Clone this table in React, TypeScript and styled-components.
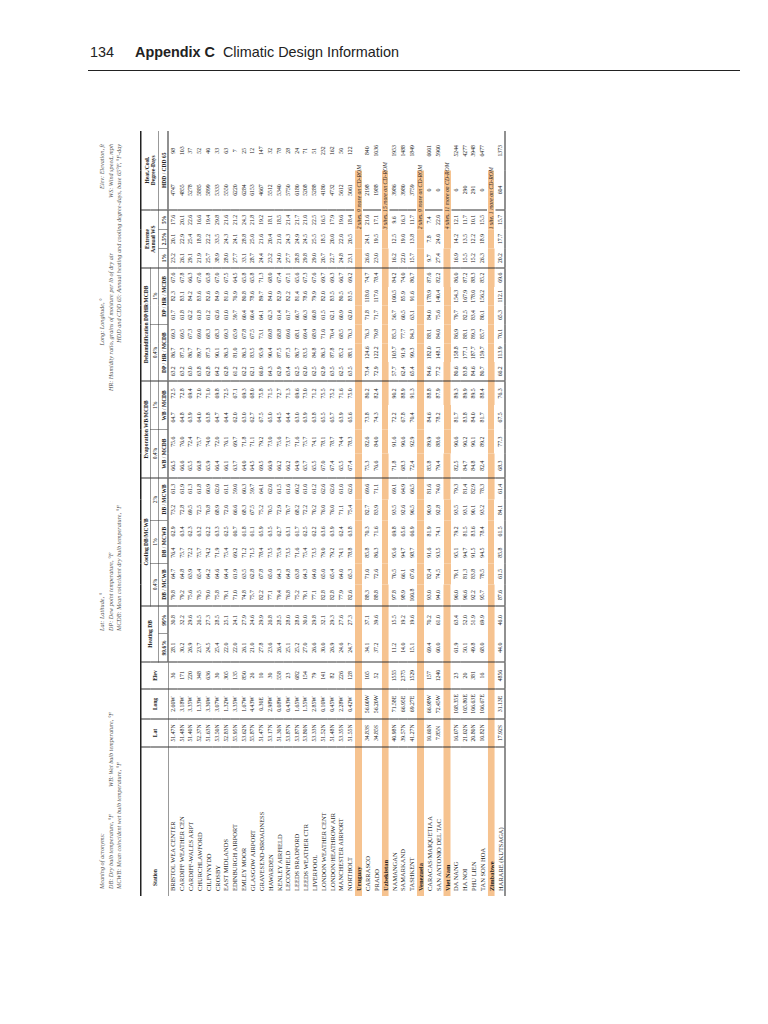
import React from 'react'
import styled, { createGlobalStyle } from 'styled-components'

const GlobalStyle = createGlobalStyle`
  body {
    margin: 0;
    background: #fff;
  }
`

const Page = styled.div`
  width: 768px;
  min-height: 1024px;
  padding-top: 43px;
  box-sizing: border-box;
  color: #222;
`

const Heading = styled.div`
  display: flex;
  align-items: baseline;
  padding-left: 90px;
  font-family: "Liberation Sans", Arial, sans-serif;
  font-size: 14.4px;
  line-height: 18px;
`

const PageNum = styled.span`
  margin-right: 21px;
`

const Chapter = styled.span`
  font-weight: 700;
  margin-right: 8px;
`

const Rule = styled.div`
  margin: 9px 0 0 88px;
  width: 652px;
  border-top: 1.5px solid #222;
`

// the landscape table is printed turned a quarter turn, so it is laid out
// flat at twice the size and then turned and halved
const Sheet = styled.div`
  margin: 60px 0 0 98px;
  width: 407px;
  height: 765px;
`

const Turned = styled.div`
  width: 1530px;
  transform-origin: 0 0;
  transform: translateY(765px) rotate(-90deg) scale(0.5);
  font-family: "Liberation Serif", "Times New Roman", serif;
  color: #222;
`

const Notes = styled.div`
  display: grid;
  grid-template-columns: 204px 312px 480px auto 1fr;
  grid-auto-rows: 17px;
  height: 54px;
  padding: 0 26px 0 14px;
  margin-bottom: 30px;
  font-size: 12.4px;
  font-style: italic;
  color: #555;
  white-space: nowrap;
  line-height: 17px;
`

const Note = styled.span<{ $col: number; $row: number; $span?: number; $end?: boolean; $center?: boolean }>`
  grid-column: ${(p) => p.$col} / span ${(p) => p.$span || 1};
  grid-row: ${(p) => p.$row};
  justify-self: ${(p) => (p.$end ? 'end' : p.$center ? 'center' : 'start')};
`

const Table = styled.table`
  width: 1530px;
  table-layout: fixed;
  border-collapse: collapse;
  border-top: 3px solid #222;
  border-bottom: 2px solid #222;
  border-left: hidden;
  border-right: hidden;
`

const Group = styled.colgroup`
  border-left: 2px solid #333;
  border-right: 2px solid #333;
`

const Col = styled.col<{ $w: number }>`
  width: ${(p) => p.$w}px;
`

const Th = styled.th<{ $left?: boolean; $light?: boolean; $h?: number }>`
  border: 1.6px solid #333;
  padding: 0 0 0 ${(p) => (p.$left ? '20px' : '0')};
  height: ${(p) => p.$h || 16}px;
  font-size: 11px;
  line-height: 12px;
  font-weight: ${(p) => (p.$light ? 400 : 700)};
  text-align: ${(p) => (p.$left ? 'left' : 'center')};
  vertical-align: middle;
  white-space: nowrap;
`

const HeadBottom = styled.tr`
  th {
    border-bottom: 2px solid #222;
  }
`

const Td = styled.td<{ $left?: boolean }>`
  height: 17.7px;
  padding: 0 0 0 ${(p) => (p.$left ? '10px' : '0')};
  font-size: ${(p) => (p.$left ? '13px' : '11.5px')};
  line-height: 1;
  text-align: ${(p) => (p.$left ? 'left' : 'center')};
  vertical-align: middle;
  white-space: nowrap;
  overflow: hidden;
`

const StripCell = styled.td<{ $note?: boolean }>`
  height: 17.7px;
  padding: 0 ${(p) => (p.$note ? '8px' : '0')} 0 ${(p) => (p.$note ? '0' : '10px')};
  background: linear-gradient(
    to bottom,
    transparent 2px,
    #f6c390 2px,
    #f6c390 calc(100% - 2px),
    transparent calc(100% - 2px)
  );
  font-size: ${(p) => (p.$note ? '11.5px' : '13px')};
  font-style: ${(p) => (p.$note ? 'italic' : 'normal')};
  font-weight: ${(p) => (p.$note ? 400 : 700)};
  text-align: ${(p) => (p.$note ? 'right' : 'left')};
  line-height: 1;
  vertical-align: middle;
  white-space: nowrap;
`

type Section = { country?: string; note?: string; rows: [string, string][] }

const sections: Section[] = [
  {
    rows: [
      ['BRISTOL WEA CENTER', '51.47N 2.60W 36 28.1 30.8 79.8 64.7 76.4 62.9 73.2 61.3 66.5 75.6 64.7 72.5 63.2 86.7 69.3 61.7 82.3 67.6 23.2 20.1 17.6 4747 98'],
      ['CARDIFF WEATHER CEN', '51.48N 3.18W 171 30.2 32.2 79.2 64.8 75.7 63.4 72.8 61.9 66.6 76.0 64.8 72.8 63.2 87.3 69.5 61.8 83.1 67.8 26.1 22.9 20.1 4855 103'],
      ['CARDIFF-WALES ARPT', '51.40N 3.35W 220 26.9 29.6 75.6 63.9 72.2 62.3 69.5 61.3 65.5 72.4 63.9 69.4 63.0 86.7 67.3 62.2 84.2 66.3 29.1 25.4 22.6 5278 37'],
      ['CHURCHLAWFORD', '52.37N 1.33W 348 23.7 26.5 79.5 65.4 75.7 63.2 72.5 61.8 66.8 75.7 64.0 72.0 63.8 89.7 69.0 61.8 83.6 67.6 21.9 18.8 16.6 5885 52'],
      ['CILFYNYDD', '51.63N 3.30W 636 24.5 27.3 79.0 64.2 74.2 62.2 70.8 60.9 65.9 74.0 63.8 71.0 62.8 87.3 68.3 61.2 82.6 65.8 25.7 22.2 19.4 5899 40'],
      ['CROSBY', '53.50N 3.07W 30 25.4 28.5 75.8 64.6 71.9 63.3 68.9 62.0 66.4 72.0 64.7 69.8 64.2 90.1 68.3 62.6 84.9 67.0 38.9 33.5 29.8 5333 33'],
      ['EAST MIDLANDS', '52.83N 1.32W 305 22.0 25.1 79.1 64.4 75.4 62.5 72.0 61.1 66.1 76.1 64.4 72.5 62.8 86.3 69.3 61.0 81.0 67.5 28.0 24.3 21.6 5550 63'],
      ['EDINBURGH AIRPORT', '55.95N 3.35W 135 22.0 24.1 71.0 61.9 69.2 60.7 66.6 59.0 63.7 69.7 62.0 67.1 61.2 81.0 65.9 59.7 76.9 64.5 27.7 24.1 21.2 6220 7'],
      ['EMLEY MOOR', '53.62N 1.67W 850 26.1 27.9 74.8 63.5 71.2 61.8 68.3 60.3 64.0 71.8 63.0 69.3 62.2 86.3 67.8 60.4 80.8 65.8 33.1 28.8 24.3 6284 25'],
      ['GLASGOW AIRPORT', '55.87N 4.43W 26 21.0 24.6 75.7 62.8 71.5 61.1 67.5 59.7 64.5 71.1 62.7 68.0 62.1 83.5 67.5 60.4 78.6 65.8 28.7 25.0 21.8 6153 12'],
      ['GRAVESEND-BROADNESS', '51.47N 0.30E 10 27.8 29.9 82.2 67.8 78.4 65.9 75.2 64.1 69.5 79.2 67.5 75.8 66.0 95.9 73.1 64.1 89.7 71.3 24.4 21.6 19.2 4667 147'],
      ['HAWARDEN', '53.17N 2.98W 30 23.6 26.8 77.1 65.0 73.5 63.5 70.5 62.0 66.9 73.0 65.0 71.5 64.3 90.4 69.8 62.3 84.0 68.0 23.2 20.4 18.1 5512 32'],
      ['KENLEY AIRFIELD', '51.30N 0.08W 558 26.4 28.5 79.4 64.3 75.9 62.7 72.9 61.5 66.2 75.6 64.5 72.7 62.9 87.5 68.8 61.4 82.9 67.4 24.0 21.0 18.5 5340 78'],
      ['LECONFIELD', '53.87N 0.43W 23 25.1 28.0 76.8 64.8 73.5 63.1 70.7 61.6 66.2 73.7 64.4 71.3 63.4 87.3 69.6 61.7 82.2 67.1 27.7 24.3 21.4 5750 28'],
      ['LEEDS BRADFORD', '53.87N 1.65W 682 25.2 28.0 75.2 63.8 71.6 61.7 68.2 60.2 64.9 71.6 63.0 69.6 62.5 86.7 68.1 60.7 81.4 65.6 28.8 24.9 21.7 6180 24'],
      ['LEEDS WEATHER CTR', '53.80N 1.55W 154 27.0 30.0 79.1 64.3 75.4 62.5 72.2 61.0 65.7 75.7 63.9 73.0 62.0 83.5 69.4 60.3 78.6 67.3 29.8 24.5 21.0 5208 71'],
      ['LIVERPOOL', '53.33N 2.85W 79 26.6 29.8 77.1 64.0 73.5 62.2 70.2 61.2 65.5 74.1 63.8 71.2 62.5 84.8 68.9 60.8 79.9 67.6 29.0 25.5 22.5 5288 51'],
      ['LONDON WEATHER CENT', '51.52N 0.10W 141 30.0 32.1 82.8 65.0 79.0 63.6 76.0 62.6 67.0 78.1 65.5 75.5 62.9 86.3 71.0 61.5 82.0 69.7 20.7 18.5 16.5 4180 232'],
      ['LONDON/HEATHROW AIR', '51.48N 0.45W 82 26.9 29.3 82.8 65.4 79.2 63.9 76.0 62.6 67.4 78.7 65.7 75.2 63.5 87.8 70.4 62.1 83.5 69.3 22.7 20.0 17.9 4732 162'],
      ['MANCHESTER AIRPORT', '53.35N 2.28W 226 24.6 27.6 77.9 64.0 74.1 62.4 71.1 61.0 65.5 74.4 63.9 71.6 62.5 85.2 68.5 60.9 80.5 66.7 24.8 22.0 19.6 5612 50'],
      ['NORTHOLT', '51.55N 0.42W 128 24.7 27.3 82.6 65.3 78.8 63.8 75.4 62.6 67.4 78.3 65.6 75.0 63.5 88.1 70.3 62.0 83.5 69.2 23.1 20.5 18.4 5061 122'],
    ],
  },
  {
    country: 'Uruguay',
    note: '2 sites, 9 more on CD-ROM',
    rows: [
      ['CARRASCO', '34.83S 56.00W 105 34.1 37.1 88.3 71.0 85.8 70.3 82.7 69.6 75.3 82.6 73.8 80.2 73.4 124.6 76.3 71.8 118.0 74.7 26.6 24.1 21.6 2198 840'],
      ['PRADO', '34.85S 56.20W 52 37.2 39.6 88.8 72.6 86.3 71.6 83.9 71.1 76.6 84.0 74.3 82.4 72.9 122.2 79.8 71.7 117.0 78.4 23.0 19.5 17.1 1988 1036'],
    ],
  },
  {
    country: 'Uzbekistan',
    note: '3 sites, 15 more on CD-ROM',
    rows: [
      ['NAMANGAN', '40.98N 71.58E 1555 11.2 15.5 97.8 70.5 95.6 69.8 93.5 69.1 71.8 91.6 72.2 90.2 57.7 103.7 85.3 56.7 100.5 84.2 16.2 12.5 9.6 3986 1953'],
      ['SAMARKAND', '39.57N 66.95E 2375 14.0 19.2 98.9 66.1 94.7 65.6 92.6 64.9 68.3 90.6 67.8 88.9 62.4 91.9 77.7 60.5 85.9 74.0 22.0 19.0 16.3 3980 1488'],
      ['TASHKENT', '41.27N 69.27E 1529 15.1 19.6 100.8 67.6 98.7 66.9 96.5 66.5 72.4 92.9 70.4 91.3 65.4 99.3 84.3 63.1 91.6 80.7 15.7 13.8 11.7 3759 1849'],
    ],
  },
  {
    country: 'Venezuela',
    note: '2 sites, 9 more on CD-ROM',
    rows: [
      ['CARACAS/MAIQUETIA A', '10.60N 66.98W 157 69.4 70.2 93.0 82.4 91.6 81.9 90.9 81.6 85.8 89.9 84.6 88.8 84.6 182.0 88.1 84.0 178.9 87.6 9.7 7.8 7.4 0 6001'],
      ['SAN ANTONIO DEL TAC', '7.85N 72.45W 1240 60.0 61.0 94.0 74.5 93.5 74.1 92.8 74.0 79.4 88.6 78.2 87.9 77.2 148.1 84.0 75.6 140.4 82.2 27.4 24.0 22.0 0 5900'],
    ],
  },
  {
    country: 'Viet Nam',
    note: '4 sites, 11 more on CD-ROM',
    rows: [
      ['DA NANG', '16.07N 108.35E 23 61.9 63.4 96.0 79.1 95.1 79.2 93.5 79.3 82.5 90.6 81.7 89.3 80.6 158.8 86.9 79.7 154.3 86.0 16.9 14.2 12.1 6 5244'],
      ['HA NOI', '21.02N 105.80E 20 50.1 52.0 96.6 81.3 94.7 81.5 93.1 81.4 84.7 90.2 83.8 89.9 83.8 177.1 88.1 82.5 167.9 87.2 15.5 13.5 11.7 290 4277'],
      ['PHU LIEN', '20.80N 106.63E 381 49.8 51.9 92.2 83.8 91.5 83.6 90.1 82.9 84.8 90.1 84.0 89.5 84.6 187.7 89.3 83.4 178.0 88.3 15.2 12.2 10.1 291 3948'],
      ['TAN SON HOA', '10.82N 106.67E 16 68.0 69.9 95.7 78.5 94.5 78.4 93.2 78.3 82.4 89.2 81.7 88.4 80.7 159.7 85.7 80.1 156.2 85.2 26.3 18.9 15.5 0 6477'],
    ],
  },
  {
    country: 'Zimbabwe',
    note: '1 site, 1 more on CD-ROM',
    rows: [
      ['HARARE (KUTSAGA)', '17.92S 31.13E 4856 44.0 46.0 87.6 61.5 85.8 61.5 84.1 61.4 68.3 77.3 67.5 76.3 66.2 113.9 70.1 65.3 112.1 69.6 20.2 17.7 15.7 604 1373'],
    ],
  },
]

// column widths per group, at the doubled size
const groups: number[][] = [
  [298],
  [56],
  [60],
  [54],
  [56, 56],
  [42.66, 42.66, 42.67, 42.67, 42.67, 42.67],
  [48.5, 48.5, 48.5, 48.5],
  [37.66, 37.66, 37.67, 37.67, 37.67, 37.67],
  [38.66, 38.67, 38.67],
  [79, 79],
]

function StripRow({ country, note }: { country: string; note: string }) {
  return (
    <tr>
      <StripCell>{country}</StripCell>
      {Array.from({ length: 23 }, (_, i) => (
        <StripCell key={i} />
      ))}
      <StripCell $note colSpan={2}>
        {note}
      </StripCell>
    </tr>
  )
}

function App() {
  return (
    <Page>
      <GlobalStyle />
      <Heading>
        <PageNum>134</PageNum>
        <Chapter>Appendix C</Chapter>
        <span>Climatic Design Information</span>
      </Heading>
      <Rule />
      <Sheet>
        <Turned>
          <Notes>
            <Note $col={1} $row={1}>Meaning of acronyms:</Note>
            <Note $col={1} $row={2}>DB: Dry bulb temperature, °F</Note>
            <Note $col={1} $row={3}>MCWB: Mean coincident wet bulb temperature, °F</Note>
            <Note $col={2} $row={2}>WB: Wet bulb temperature, °F</Note>
            <Note $col={3} $row={1}>Lat: Latitude, °</Note>
            <Note $col={3} $row={2}>DP: Dew point temperature, °F</Note>
            <Note $col={3} $row={3}>MCDB: Mean coincident dry bulb temperature, °F</Note>
            <Note $col={4} $row={1} $center>Long: Longitude, °</Note>
            <Note $col={4} $row={2} $center>HR: Humidity ratio, grains of moisture per lb of dry air</Note>
            <Note $col={4} $row={3} $span={2} $end>
              HDD and CDD 65: Annual heating and cooling degree-days, base 65°F, °F-day
            </Note>
            <Note $col={5} $row={1} $end>Elev: Elevation, ft</Note>
            <Note $col={5} $row={2} $end>WS: Wind speed, mph</Note>
          </Notes>
          <Table>
            {groups.map((g, i) => (
              <Group key={i}>
                {g.map((w, j) => (
                  <Col key={j} $w={w} />
                ))}
              </Group>
            ))}
            <thead>
              <tr>
                <Th rowSpan={3} $left>Station</Th>
                <Th rowSpan={3}>Lat</Th>
                <Th rowSpan={3}>Long</Th>
                <Th rowSpan={3}>Elev</Th>
                <Th rowSpan={2} colSpan={2}>Heating DB</Th>
                <Th colSpan={6} $h={17}>Cooling DB/MCWB</Th>
                <Th colSpan={4}>Evaporation WB/MCDB</Th>
                <Th colSpan={6}>Dehumidification DP/HR/MCDB</Th>
                <Th rowSpan={2} colSpan={3}>
                  Extreme
                  <br />
                  Annual WS
                </Th>
                <Th rowSpan={2} colSpan={2}>
                  Heat./Cool.
                  <br />
                  Degree-Days
                </Th>
              </tr>
              <tr>
                <Th $light colSpan={2}>0.4%</Th>
                <Th $light colSpan={2}>1%</Th>
                <Th $light colSpan={2}>2%</Th>
                <Th $light colSpan={2}>0.4%</Th>
                <Th $light colSpan={2}>1%</Th>
                <Th $light colSpan={3}>0.4%</Th>
                <Th $light colSpan={3}>1%</Th>
              </tr>
              <HeadBottom>
                <Th $h={17}>99.6%</Th>
                <Th>99%</Th>
                <Th colSpan={2}>DB / MCWB</Th>
                <Th colSpan={2}>DB / MCWB</Th>
                <Th colSpan={2}>DB / MCWB</Th>
                <Th colSpan={2}>WB / MCDB</Th>
                <Th colSpan={2}>WB / MCDB</Th>
                <Th colSpan={3}>DP / HR / MCDB</Th>
                <Th colSpan={3}>DP / HR / MCDB</Th>
                <Th>1%</Th>
                <Th>2.5%</Th>
                <Th>5%</Th>
                <Th colSpan={2}>HDD / CDD 65</Th>
              </HeadBottom>
            </thead>
            <tbody>
              {sections.map((s) => (
                <React.Fragment key={s.country || 'uk'}>
                  {s.country && <StripRow country={s.country} note={s.note || ''} />}
                  {s.rows.map(([name, values]) => (
                    <tr key={name}>
                      <Td $left>{name}</Td>
                      {values.split(' ').map((v, i) => (
                        <Td key={i}>{v}</Td>
                      ))}
                    </tr>
                  ))}
                </React.Fragment>
              ))}
            </tbody>
          </Table>
        </Turned>
      </Sheet>
    </Page>
  )
}

export default App
